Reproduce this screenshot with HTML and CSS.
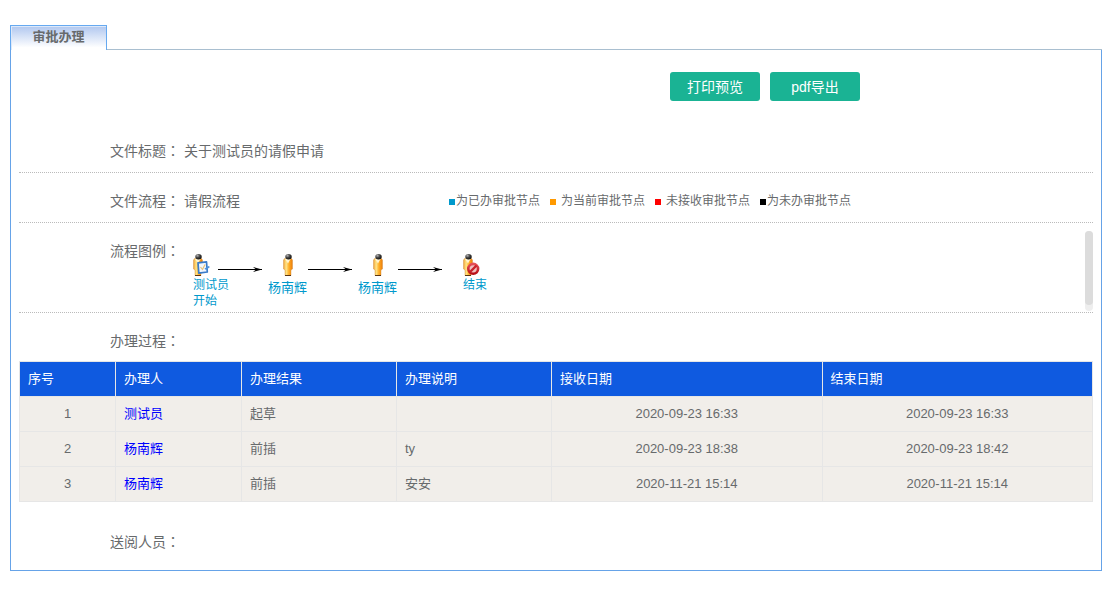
FILE: index.html
```
<!DOCTYPE html>
<html lang="zh-CN">
<head>
  <meta charset="UTF-8" />
  <title>审批办理</title>
  <link rel="stylesheet" href="styles.css">
</head>
<body>

  <nav class="tabs">
    <a href="#approval" class="tab">审批办理</a>
  </nav>

  <main class="panel" id="approval">
    <div class="toolbar">
      <button type="button" class="btn">打印预览</button>
      <button type="button" class="btn">pdf导出</button>
    </div>

    <div class="row">
      <span class="label">文件标题<span class="colon" lang="zh-TW">：</span></span>
      <span class="value">关于测试员的请假申请</span>
    </div>

    <div class="row">
      <span class="label">文件流程<span class="colon" lang="zh-TW">：</span></span>
      <span class="value">请假流程</span>
      <div class="legend">
        <span class="legend-item"><i class="dot done"></i>为已办审批节点</span>
        <span class="legend-item spaced"><i class="dot current"></i>为当前审批节点</span>
        <span class="legend-item spaced"><i class="dot unreceived"></i>未接收审批节点</span>
        <span class="legend-item"><i class="dot todo"></i>为未办审批节点</span>
      </div>
    </div>

    <div class="row row-flow">
      <span class="label">流程图例<span class="colon" lang="zh-TW">：</span></span>

      <!-- Símbolos usados no fluxo -->
      <svg class="defs" width="0" height="0" aria-hidden="true">
        <defs>
          <linearGradient id="suit" x1="0" x2="1" y1="0" y2="0">
            <stop offset="0" stop-color="#f0a030" />
            <stop offset="0.3" stop-color="#ffe68a" />
            <stop offset="0.6" stop-color="#ffae26" />
            <stop offset="1" stop-color="#ec7c0a" />
          </linearGradient>
          <radialGradient id="head" cx="0.35" cy="0.3" r="0.7">
            <stop offset="0" stop-color="#b5b5b5" />
            <stop offset="0.5" stop-color="#444" />
            <stop offset="1" stop-color="#111" />
          </radialGradient>
          <linearGradient id="ban" x1="0" x2="0" y1="0" y2="1">
            <stop offset="0" stop-color="#e65058" />
            <stop offset="1" stop-color="#b80f18" />
          </linearGradient>
          <symbol id="person" viewBox="0 0 10 23">
            <path d="M1.500 4.500h7L9.500 6v9l-1.500 1v5.500H2V16L.5 15V6z" fill="url(#suit)" stroke="#c98a3a" stroke-width="0.4" />
            <path d="M2 5h5.500L5 9.500z" fill="#fff3cf" />
            <path d="M2 21h6v1H2z" fill="#5a3412" />
            <ellipse cx="5.500" cy="2.800" rx="3.200" ry="2.700" fill="url(#head)" />
          </symbol>
          <symbol id="arrow" viewBox="0 0 45 7">
            <path d="M0 3.500h44" stroke="#000" stroke-width="1" />
            <path d="M35 1l9 2.500-9 2.500 3-2.500z" fill="#000" />
          </symbol>
        </defs>
      </svg>

      <div class="flow">
        <div class="node node-start">
          <svg width="18" height="23" viewBox="0 0 18 23">
            <use href="#person" width="10" height="23" />
            <path d="M5 8.800l8.500-1 .8 10.200-8.500 1.200z" fill="#f0f7ff" stroke="#3a7bc8" stroke-width="1.700" stroke-linejoin="round" />
            <path d="M7.500 13l2 2.500 2.500-5" fill="none" stroke="#e6c27a" stroke-width="1.200" />
            <path d="M11.500 14.500l4-2.500 1.500 1-4 3z" fill="#4a90dc" />
          </svg>
          <span>测试员<br>开始</span>
        </div>
        <svg class="arrow arrow-1"><use href="#arrow" /></svg>
        <div class="node node-second">
          <svg width="10" height="23"><use href="#person" /></svg>
          <span>杨南辉</span>
        </div>
        <svg class="arrow arrow-2"><use href="#arrow" /></svg>
        <div class="node node-third">
          <svg width="10" height="23"><use href="#person" /></svg>
          <span>杨南辉</span>
        </div>
        <svg class="arrow arrow-3"><use href="#arrow" /></svg>
        <div class="node node-end">
          <svg width="18" height="23" viewBox="0 0 18 23">
            <use href="#person" width="10" height="23" />
            <circle cx="10.200" cy="14.800" r="4.900" fill="#f0c0c0" stroke="url(#ban)" stroke-width="2.600" />
            <path d="M7 18l6.500-6.500" stroke="#c9222a" stroke-width="2.400" />
          </svg>
          <span>结束</span>
        </div>
      </div>

      <div class="scrollbar"><div class="thumb"></div></div>
    </div>

    <div class="row row-plain">
      <span class="label">办理过程<span class="colon" lang="zh-TW">：</span></span>
    </div>

    <table class="process">
      <colgroup>
        <col class="col-no">
        <col class="col-person">
        <col class="col-text">
        <col class="col-text">
        <col>
        <col>
      </colgroup>
      <thead>
        <tr>
          <th>序号</th>
          <th>办理人</th>
          <th>办理结果</th>
          <th>办理说明</th>
          <th>接收日期</th>
          <th>结束日期</th>
        </tr>
      </thead>
      <tbody>
        <tr>
          <td class="center">1</td>
          <td><a href="#">测试员</a></td>
          <td>起草</td>
          <td></td>
          <td class="center">2020-09-23 16:33</td>
          <td class="center">2020-09-23 16:33</td>
        </tr>
        <tr>
          <td class="center">2</td>
          <td><a href="#">杨南辉</a></td>
          <td>前插</td>
          <td>ty</td>
          <td class="center">2020-09-23 18:38</td>
          <td class="center">2020-09-23 18:42</td>
        </tr>
        <tr>
          <td class="center">3</td>
          <td><a href="#">杨南辉</a></td>
          <td>前插</td>
          <td>安安</td>
          <td class="center">2020-11-21 15:14</td>
          <td class="center">2020-11-21 15:14</td>
        </tr>
      </tbody>
    </table>

    <div class="row row-plain row-readers">
      <span class="label">送阅人员<span class="colon" lang="zh-TW">：</span></span>
    </div>
  </main>

</body>
</html>
```
FILE: styles.css
```
* {
  box-sizing: border-box;
}

body {
  margin: 0;
  padding: 25px 10px;
  background-color: #fff;
  color: #676a6c;
  font-family: "Liberation Sans", "Noto Sans CJK SC", sans-serif;
  font-size: 14px;
  line-height: 20px;
}

.tabs {
  display: flex;
}

/* preenche o resto da linha ao lado da aba */
.tabs::after {
  content: "";
  flex: 1;
  border-bottom: 1px solid #a9bfd0;
}

.tab {
  width: 97px;
  height: 25px;
  border: 1px solid #66a9f0;
  border-bottom: none;
  background: linear-gradient(#b0c7ef, #fff 90%);
  box-shadow: inset 1px 1px 0 #dce8fa;
  color: #676a6c;
  font-size: 13px;
  font-weight: bold;
  line-height: 22px;
  text-align: center;
  text-decoration: none;
}

.panel {
  border: 1px solid #66a3e8;
  border-top: none;
  padding: 22px 8px 8px;
}

.toolbar {
  display: flex;
  justify-content: flex-end;
  gap: 10px;
  padding-right: 233px;
  margin-bottom: 22px;
}

.btn {
  width: 90px;
  height: 29px;
  padding: 0 0 2px;
  border: none;
  border-radius: 3px;
  background-color: #1ab394;
  color: white;
  font-family: inherit;
  font-size: 14px;
  cursor: pointer;
}

.row {
  display: flex;
  align-items: center;
  height: 50px;
  padding-top: 6px;
  border-bottom: 1px dotted #bbb;
}

.label {
  width: 165px;
  padding-left: 91px;
  white-space: nowrap;
}

.colon {
  font-family: "Noto Sans CJK TC", sans-serif;
  line-height: 1;
}

.value {
  flex: none;
}

.legend {
  display: flex;
  gap: 10px;
  margin-left: auto;
  padding-right: 242px;
  font-size: 12px;
  white-space: nowrap;
}

.legend-item {
  display: flex;
  align-items: center;
  gap: 1px;
}

.legend-item.spaced {
  gap: 5px;
}

.dot {
  width: 6px;
  height: 6px;
  margin-top: 3px;
}

.done {
  background-color: #0099cc;
}

.current {
  background-color: #ff9900;
}

.unreceived {
  background-color: #ff0000;
}

.todo {
  background-color: #000;
}

/* Fluxo de aprovação */
.row-flow {
  align-items: flex-start;
  height: 90px;
  padding-top: 8px;
}

.row-flow .label {
  padding-top: 10px;
}

.defs {
  position: absolute;
}

.flow {
  position: relative;
  flex: 1;
  height: 80px;
}

.node {
  position: absolute;
  top: 23px;
  display: flex;
  flex-direction: column;
  align-items: center;
  color: #0099cc;
  font-size: 13px;
  white-space: nowrap;
}

.node span {
  line-height: 22px;
}

.node-start,
.node-end {
  align-items: flex-start;
  font-size: 12px;
}

.node-start span,
.node-end span {
  line-height: 16px;
}

.node-start {
  left: 9px;
}

.node-second {
  left: 84px;
}

.node-third {
  left: 174px;
}

.node-end {
  left: 279px;
}

.arrow {
  position: absolute;
  top: 35px;
  width: 45px;
  height: 7px;
}

.arrow-1 {
  left: 34px;
}

.arrow-2 {
  left: 124px;
}

.arrow-3 {
  left: 214px;
}

.scrollbar {
  width: 8px;
  height: 80px;
  border-radius: 4px;
  background-color: #eee;
}

.thumb {
  height: 74px;
  border-radius: 4px;
  background-color: #dcdcdc;
}

.row-plain {
  height: 48px;
  padding-top: 8px;
  border-bottom: none;
}

.row-readers {
  height: 60px;
  padding-top: 20px;
}

/* Tabela do processo */
.process {
  width: 100%;
  table-layout: fixed;
  border-collapse: collapse;
  font-size: 13px;
}

.col-no {
  width: 96px;
}

.col-person {
  width: 126px;
}

.col-text {
  width: 155px;
}

.process th,
.process td {
  height: 35px;
  padding: 0 8px 1px;
  border: 1px solid #e6e6e6;
  text-align: left;
}

.process th {
  background-color: #0f5ae0;
  color: white;
  font-weight: normal;
}

.process td {
  background-color: #f1eeea;
}

.process td.center {
  text-align: center;
}

.process a {
  color: #0000ff;
  text-decoration: none;
}
```
